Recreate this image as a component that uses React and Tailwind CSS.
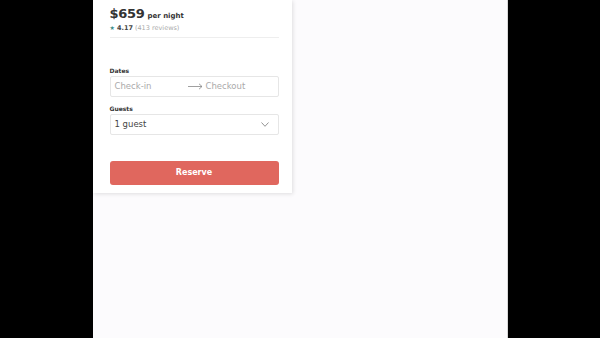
export default function App() {
  return (
    <div className="w-[600px] h-[338px] bg-black flex justify-center overflow-hidden" style={{ fontFamily: '"DejaVu Sans", "Open Sans", sans-serif' }}>
      <div className="w-[415px] h-[338px] bg-[#fcfbfd] border-r border-[#d8d8d8] flex flex-col items-start">
        <div className="w-[199px] bg-white shadow-[1px_1px_4px_rgba(0,0,0,0.12)] pl-[17px] pr-[13px] pt-[6px] pb-[8px]">
          <div className="flex items-baseline gap-[3px] text-[#333] leading-[16px]">
            <span className="text-[13px] font-bold tracking-[-0.3px]">$659</span>
            <span className="text-[7px] font-bold">per night</span>
          </div>
          <div className="flex items-center gap-[2px] text-[6.5px] leading-[8px]">
            <span className="text-[#3d8f8a] text-[6px]">★</span>
            <span className="font-bold text-[#444]">4.17</span>
            <span className="text-[#aaa]">(413 reviews)</span>
          </div>
          <div className="h-px bg-[#eee] mt-[5px]" />
          <div className="mt-[29px] text-[6px] leading-[8px] font-bold text-[#333]">Dates</div>
          <div className="mt-[1px] h-[21px] border border-[#e6e6e6] rounded-[2px] flex items-center px-[4px] text-[8.5px] text-[#aaa]">
            <span className="w-[73px]">Check-in</span>
            <svg width="15" height="7" viewBox="0 0 15 7" className="mr-[3px]">
              <path d="M0 3.5 H14 M11 0.8 L14 3.5 L11 6.2" stroke="#888" strokeWidth="0.8" fill="none" />
            </svg>
            <span>Checkout</span>
          </div>
          <div className="mt-[8px] text-[6px] leading-[8px] font-bold text-[#333]">Guests</div>
          <div className="mt-[1px] h-[21px] border border-[#e6e6e6] rounded-[2px] flex items-center justify-between pl-[4px] pr-[9px] text-[8.5px] text-[#444]">
            <span>1 guest</span>
            <svg width="8" height="5" viewBox="0 0 8 5">
              <path d="M0.5 0.5 L4 4.3 L7.5 0.5" stroke="#888" strokeWidth="0.9" fill="none" />
            </svg>
          </div>
          <button className="mt-[26px] w-full h-[24px] bg-[#e0675e] rounded-[3px] text-white text-[8px] font-bold">Reserve</button>
        </div>
      </div>
    </div>
  );
}
